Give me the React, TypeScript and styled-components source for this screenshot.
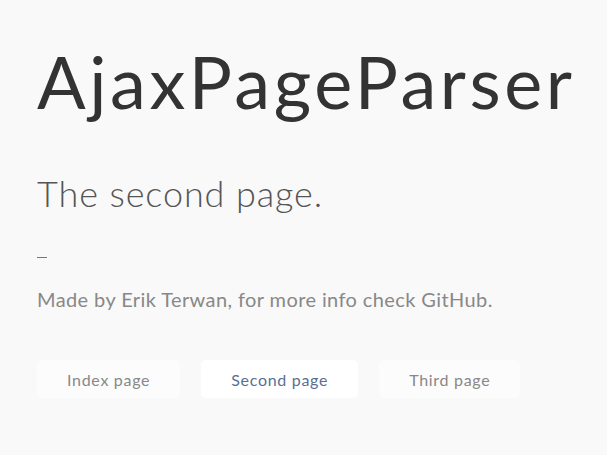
import styled, { createGlobalStyle } from 'styled-components';

const GlobalStyle = createGlobalStyle`
  html, body {
    margin: 0;
    padding: 0;
    background-color: #f9f9f9;
  }

  body {
    font-family: Lato, "Open Sans", sans-serif;
  }
`;

const Page = styled.main`
  display: flex;
  flex-direction: column;
  align-items: flex-start;
  padding: 33px 37px;
`;

const Title = styled.h1`
  margin: 0;
  font-size: 72px;
  font-weight: 400;
  line-height: 96px;
  letter-spacing: 3.6px;
  color: #333;
`;

const Subtitle = styled.h2`
  margin: 42px 0 0;
  font-size: 36px;
  font-weight: 300;
  line-height: 44px;
  letter-spacing: 0.9px;
  color: #555;
`;

const Dash = styled.hr`
  width: 10px;
  margin: 42px 0 0;
  border: 0;
  border-top: 1px solid #777;
`;

const Credits = styled.p`
  margin: 27px 0 0;
  font-size: 20px;
  font-weight: 400;
  line-height: 28px;
  letter-spacing: 0.4px;
  color: #888;
`;

const Nav = styled.nav`
  display: flex;
  gap: 21px;
  margin-top: 47px;
`;

const NavButton = styled.a<{ $active?: boolean }>`
  display: flex;
  align-items: center;
  justify-content: center;
  height: 38px;
  padding: 0 30px;
  border-radius: 5px;
  background-color: ${(props) => (props.$active ? '#ffffff' : '#fcfcfc')};
  color: ${(props) => (props.$active ? '#5a6e95' : '#888')};
  font-size: 16px;
  letter-spacing: 0.7px;
  text-decoration: none;
`;

function App() {
  return (
    <>
      <GlobalStyle />
      <Page>
        <Title>AjaxPageParser</Title>
        <Subtitle>The second page.</Subtitle>
        <Dash />
        <Credits>Made by Erik Terwan, for more info check GitHub.</Credits>
        <Nav>
          <NavButton href='#'>Index page</NavButton>
          <NavButton href='#' $active>
            Second page
          </NavButton>
          <NavButton href='#'>Third page</NavButton>
        </Nav>
      </Page>
    </>
  );
}

export default App;
